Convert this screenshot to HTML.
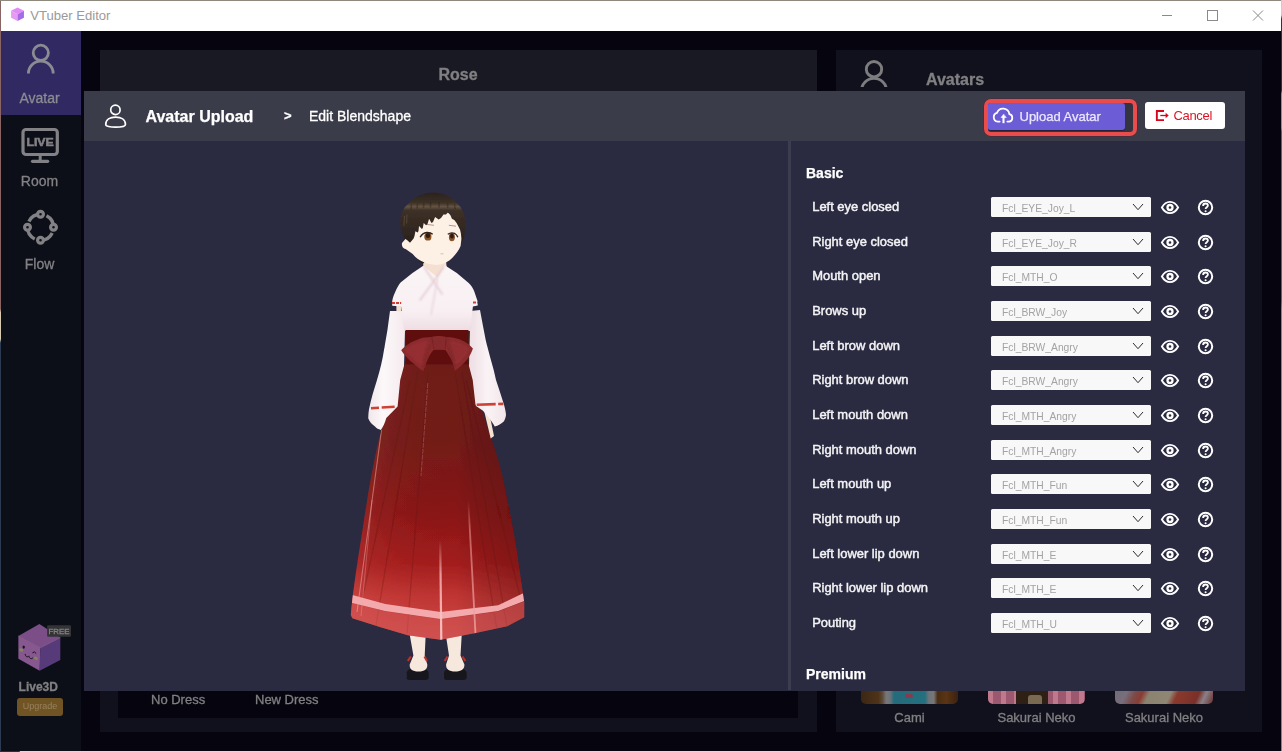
<!DOCTYPE html>
<html lang="en">
<head>
<meta charset="utf-8">
<title>VTuber Editor</title>
<style>
*{box-sizing:border-box;margin:0;padding:0}
html,body{width:1282px;height:752px;overflow:hidden;background:#8a7f78}
body{font-family:"Liberation Sans",sans-serif;position:relative}
.abs{position:absolute}
#desk{left:0;top:0;width:1282px;height:752px;background:#8f887c}
#dl{left:0;top:1px;width:1px;height:751px;background:linear-gradient(180deg,#8a6462 0,#8a6462 41%,#d9cbb2 41.500%,#d9cbb2 45%,#2c3b52 45.500%,#2c3b52 100%)}
#dr{left:1281px;top:0;width:1px;height:752px;background:linear-gradient(180deg,#d0ccc4 0,#d0ccc4 2%,#2a3448 2.500%,#2a3448 12%,#9a8a78 12.500%,#9a8a78 17%,#5a6a60 17.500%,#5a6a60 40%,#9a7a7a 41%,#9a7a7a 100%)}
#db{left:0;top:751px;width:1282px;height:1px;background:linear-gradient(90deg,#22304a 0,#22304a 1.500%,#e2dace 1.600%,#e2dace 100%)}
#win{left:1px;top:1px;width:1280px;height:750px;background:#06050f;overflow:hidden}
#title{left:0;top:0;width:1280px;height:30px;background:#fff}
#title .t{left:29.200px;top:7px;font-size:13.100px;line-height:16px;color:#9a9a9a;white-space:nowrap}
#side{will-change:transform;left:0;top:30px;width:80px;height:720px;background:#0d0f18}
#side .act{left:0;top:0;width:80px;height:84px;background:#312a62}
.slabel{width:77px;text-align:center;font-size:14px;line-height:16px;color:#8b8b93;left:0;-webkit-text-stroke:0.3px #8b8b93}
.bp{background:#11111d}
.gtxt{color:#808083;white-space:nowrap;will-change:transform;-webkit-text-stroke:0.3px #808083}
#modal{will-change:transform;left:83px;top:90px;width:1161px;height:600px;background:#2a2b40;overflow:hidden}
#mhead{left:0;top:0;width:1161px;height:50px;background:#3b3c4a}
.w{color:#fff;white-space:nowrap;-webkit-text-stroke:0.25px #fff}
.row{left:707px;width:454px;height:20px}
.row .lb{left:21.2px;top:1px;font-size:12.95px;line-height:18px;color:#f4f4f6;white-space:nowrap;-webkit-text-stroke:0.45px #f4f4f6}
.row .dd{left:200px;top:0;width:160px;height:19.6px;background:#f8f8f8;border-radius:1.5px}
.row .dd span{position:absolute;left:11px;top:3.8px;font-size:10.3px;line-height:15px;color:#a3a3a3;white-space:nowrap}
.row .dd svg{position:absolute;left:141px;top:6px}
.row .eye{left:369.3px;top:3px}
.row .hp{left:406.2px;top:2.1px}
</style>
</head>
<body>
<div id="desk" class="abs"></div><div id="dl" class="abs"></div><div id="dr" class="abs"></div><div id="db" class="abs"></div>
<div id="win" class="abs">

<!-- title bar -->
<div id="title" class="abs">
  <svg class="abs" style="left:8.500px;top:5.600px" width="15" height="15" viewBox="0 0 14 14">
    <polygon points="7,0.5 13,3.5 7,6.8 1,3.5" fill="#e08cf5"/>
    <polygon points="1,3.5 7,6.8 7,13 1,10" fill="#e79af3"/>
    <polygon points="13,3.5 7,6.8 7,13 13,10" fill="#a46be6"/>
  </svg>
  <div class="t abs">VTuber Editor</div>
  <svg class="abs" style="left:1160px;top:8px" width="110" height="14" viewBox="0 0 110 14" fill="none" stroke="#8a8a8a" stroke-width="1">
    <path d="M1 6.5h10"/>
    <rect x="46.5" y="1.5" width="10" height="10"/>
    <path d="M92 1.5l10 10M102 1.5l-10 10"/>
  </svg>
</div>

<!-- sidebar -->
<div id="side" class="abs">
  <div class="act abs"></div>
  <svg class="abs" style="left:24px;top:10px" width="32" height="36" viewBox="0 0 32 36" fill="none" stroke="#8b8b93" stroke-width="2.8">
    <circle cx="15.8" cy="11.8" r="7.6"/>
    <path d="M3.4 32.5 A12.4 12.4 0 0 1 28.2 32.5"/>
  </svg>
  <div class="slabel abs" style="top:59px">Avatar</div>

  <svg class="abs" style="left:19px;top:95px" width="42" height="40" viewBox="0 0 42 40" fill="none" stroke="#828286" stroke-width="3.2">
    <rect x="3" y="3.5" width="34.3" height="25" rx="3"/>
    <path d="M20.2 28v7" stroke-width="3"/>
    <path d="M12.5 35.3h15.2" stroke-linecap="round" stroke-width="3.2"/>
    <text x="20.1" y="20.4" text-anchor="middle" font-family="Liberation Sans, sans-serif" font-weight="bold" font-size="10.6" fill="#828286" stroke="#828286" stroke-width="0.5" textLength="27.4" lengthAdjust="spacingAndGlyphs">LIVE</text>
  </svg>
  <div class="slabel abs" style="top:142px;color:#828286;-webkit-text-stroke-color:#828286">Room</div>

  <svg class="abs" style="left:20px;top:176px" width="40" height="40" viewBox="0 0 40 40" fill="none" stroke="#828286">
    <circle cx="19.5" cy="20.3" r="13" stroke-width="3.4" stroke-dasharray="14.6 5.82" stroke-dashoffset="14.6"/>
    <g stroke-width="3.2" fill="#0d0f18">
      <circle cx="19.5" cy="7.2" r="2.9"/><circle cx="19.5" cy="33.3" r="2.9"/>
      <circle cx="6.5" cy="20.3" r="2.9"/><circle cx="32.5" cy="20.3" r="2.9"/>
    </g>
  </svg>
  <div class="slabel abs" style="top:225px;color:#828286;-webkit-text-stroke-color:#828286">Flow</div>

  <!-- Live3D cube -->
  <svg class="abs" style="left:14px;top:590px" width="62" height="54" viewBox="0 0 62 54">
    <polygon points="24.400,3 45.300,16.600 25.200,26.900 3.400,15" fill="#7b4e88"/>
    <polygon points="3.400,15 25.200,26.900 24.700,49.700 3.400,37.700" fill="#86588f"/>
    <polygon points="45.300,16.600 25.200,26.900 24.700,49.700 45.300,38.900" fill="#573a79"/>
    <path d="M3.400 15L25.200 26.900L45.300 16.600" stroke="#9a6ea0" stroke-width=".6" fill="none"/>
    <ellipse cx="8.700" cy="26.100" rx="1.150" ry="1.600" fill="#1a0f1e"/>
    <path d="M10.200 33.300c.3 2.500 2.200 3.400 3.600 1.600c.6 2.800 2.600 3.600 4 2" fill="none" stroke="#1a0f1e" stroke-width="1" stroke-linecap="round"/>
    <path d="M17.700 31.600q1.800-2 3.300.6" fill="none" stroke="#1a0f1e" stroke-width="1" stroke-linecap="round"/>
    <ellipse cx="6.200" cy="28.900" rx="2.100" ry="1.500" fill="#80875f" transform="rotate(28 6.200 28.900)"/>
    <ellipse cx="20.900" cy="37.300" rx="2.100" ry="1.500" fill="#80875f" transform="rotate(28 20.900 37.300)"/>
    <rect x="32.100" y="4.200" width="23.900" height="11.600" rx="1.200" fill="#343437"/>
    <text x="43.900" y="12.700" text-anchor="middle" font-family="Liberation Sans, sans-serif" font-size="8" fill="#848484" stroke="#848484" stroke-width="0.300" textLength="21" lengthAdjust="spacingAndGlyphs">FREE</text>
  </svg>
  <div class="abs" style="left:0;top:647.600px;width:74.600px;text-align:center;font-size:12px;font-weight:bold;line-height:16px;color:#808082;-webkit-text-stroke:0.3px #808082">Live3D</div>
  <div class="abs" style="left:16px;top:667px;width:46px;height:18px;border-radius:3px;background:#715423;color:#958260;font-size:9px;line-height:17px;text-align:center">Upgrade</div>
</div>

<!-- background panels (dimmed) -->
<div class="abs bp" style="left:98.600px;top:49px;width:717.400px;height:682px"></div>
<div class="abs" style="left:98.600px;top:49px;width:717.400px;height:52px;background:#191923"></div>
<div class="abs" style="left:117px;top:100px;width:680px;height:617px;background:#06050f"></div>
<div class="abs gtxt" style="left:98px;top:64px;width:718px;text-align:center;font-size:16px;font-weight:bold;line-height:20px">Rose</div>
<div class="abs gtxt" style="left:150px;top:690px;font-size:13px;line-height:18px">No Dress</div>
<div class="abs gtxt" style="left:254px;top:690px;font-size:13px;line-height:18px">New Dress</div>

<div class="abs bp" style="left:835px;top:49px;width:426px;height:682px"></div>
<svg class="abs" style="left:857px;top:55px" width="32" height="30.700" viewBox="0 0 32 30.700" fill="none" stroke="#7d7d80" stroke-width="2.900">
  <circle cx="16" cy="13.200" r="7.700"/>
  <path d="M3.400 35 A12.600 12.600 0 0 1 28.600 35"/>
</svg>
<div class="abs gtxt" style="left:925px;top:69px;font-size:16px;font-weight:bold;line-height:20px">Avatars</div>

<!-- thumbnails -->
<div class="abs" style="left:860px;top:660px;width:97px;height:42.500px;border-radius:5px;overflow:hidden;background:linear-gradient(90deg,#3c2714 0,#4e3318 18%,#5c4a36 22%,#77777a 26%,#6f7478 30%,#246b7c 34%,#24707f 66%,#6f7478 70%,#77777a 75%,#4a2d12 79%,#5a3414 88%,#3a2210 100%)">
  <div class="abs" style="left:44px;top:33px;width:8px;height:4px;border-radius:2px;background:#8a3a4a"></div>
</div>
<div class="abs" style="left:987px;top:660px;width:97px;height:42.500px;border-radius:5px;overflow:hidden;background:repeating-linear-gradient(90deg,#c0788c 0,#c0788c 5px,#9c586e 5px,#9c586e 13px)">
  <div class="abs" style="left:28px;top:26px;width:32px;height:18px;background:#2f2016;border-radius:3px 3px 0 0"></div>
  <div class="abs" style="left:40px;top:34px;width:14px;height:10px;background:#7a6a52;border-radius:3px 3px 0 0"></div>
</div>
<div class="abs" style="left:1114px;top:660px;width:98px;height:42.500px;border-radius:5px;overflow:hidden;background:linear-gradient(115deg,#6e6672 0,#77707c 22%,#7d4a48 30%,#8a3c34 36%,#8c8270 42%,#8f8674 60%,#8a3a2c 66%,#7a3028 84%,#8a8088 90%,#6a3030 100%)"></div>
<div class="abs gtxt" style="left:860px;top:708px;width:97px;text-align:center;font-size:13px;line-height:18px">Cami</div>
<div class="abs gtxt" style="left:977px;top:708px;width:117px;text-align:center;font-size:13px;line-height:18px">Sakurai Neko</div>
<div class="abs gtxt" style="left:1104px;top:708px;width:118px;text-align:center;font-size:13px;line-height:18px">Sakurai Neko</div>

<!-- modal -->
<div id="modal" class="abs">
  <div id="mhead" class="abs"></div>
  <svg class="abs" style="left:20px;top:12px" width="26" height="28" viewBox="0 0 26 28" fill="none" stroke="#fff" stroke-width="1.700">
    <circle cx="11.400" cy="6.900" r="4.700"/>
    <path d="M1.750 21.400C1.750 16.600 6 14.150 11.600 14.150S21.450 16.600 21.450 21.400C21.450 23.300 17 24.050 11.600 24.050S1.750 23.300 1.750 21.400z"/>
  </svg>
  <div class="abs w" style="left:61.500px;top:15.500px;font-size:16px;font-weight:bold;line-height:20px">Avatar Upload</div>
  <div class="abs w" style="left:200px;top:16px;font-size:13px;font-weight:bold;line-height:18px">&gt;</div>
  <div class="abs w" style="left:225px;top:16px;font-size:14px;line-height:18px;-webkit-text-stroke:0.3px #fff">Edit Blendshape</div>

  <div class="abs" style="left:900.100px;top:7.500px;width:152.900px;height:37.600px;border:4.200px solid #ea4b4c;border-radius:7px;background:#33343f;box-shadow:0 0 0 .5px rgba(90,30,40,.7)"></div>
  <div class="abs" style="left:903.800px;top:11.700px;width:137.500px;height:27.600px;background:#6c5cd6;border-radius:2px 3px 3px 2px;box-shadow:0 1px 0 rgba(20,20,40,.5)"></div>
  <svg class="abs" style="left:908.200px;top:15.900px" width="23" height="18.800" viewBox="0 0 22 18" fill="none" stroke="#fff" stroke-width="1.700" stroke-linecap="round" stroke-linejoin="round">
    <path d="M7.300 14H5.400a4.300 4.300 0 0 1-.6-8.400 6.100 6.100 0 0 1 11.800 1.300 3.600 3.600 0 0 1-.4 7.100H14.700"/>
    <path d="M11 15.500V9.500" stroke-width="2" stroke-linecap="butt"/>
    <path d="M11 7.100L8.700 10.100H13.300z" fill="#fff" stroke-width=".6"/>
  </svg>
  <div class="abs" style="left:935.500px;top:16.600px;font-size:13px;line-height:18px;color:#ece8ff;white-space:nowrap;-webkit-text-stroke:0.25px #ece8ff">Upload Avatar</div>

  <div class="abs" style="left:1061px;top:11.200px;width:80px;height:26.700px;background:#fff;border-radius:3px"></div>
  <svg class="abs" style="left:1071px;top:19px" width="15" height="12" viewBox="0 0 15 12" fill="none" stroke="#d6061c">
    <path d="M9 0.950H1.850V10.150H9" stroke-width="1.900"/>
    <path d="M5.300 5.500H11" stroke-width="1.300"/>
    <path d="M10.600 2.800L13.700 5.500L10.600 8.200z" fill="#d6061c" stroke="none"/>
  </svg>
  <div class="abs" style="left:1089.400px;top:16px;font-size:13px;line-height:18px;letter-spacing:-0.3px;color:#da1626;white-space:nowrap">Cancel</div>
  <!--CHAR_S-->
  <svg class="abs" style="left:256px;top:89px" width="270" height="500" viewBox="340 180 270 500">
    <defs>
      <linearGradient id="sk" x1="0" y1="366" x2="0" y2="640" gradientUnits="userSpaceOnUse">
        <stop offset="0" stop-color="#701d19"/><stop offset=".28" stop-color="#731b18"/><stop offset=".54" stop-color="#8a1616"/>
        <stop offset=".72" stop-color="#a41d1d"/><stop offset=".84" stop-color="#c03533"/><stop offset="1" stop-color="#cf4c4b"/>
      </linearGradient>
      <linearGradient id="skx" x1="350" y1="0" x2="526" y2="0" gradientUnits="userSpaceOnUse">
        <stop offset="0" stop-color="#ff9a90" stop-opacity=".12"/><stop offset=".25" stop-color="#ff8a80" stop-opacity=".03"/><stop offset=".6" stop-color="#000" stop-opacity="0"/><stop offset="1" stop-color="#300" stop-opacity=".28"/>
      </linearGradient>
      <linearGradient id="hair" x1="0" y1="192" x2="0" y2="246" gradientUnits="userSpaceOnUse">
        <stop offset="0" stop-color="#2b211c"/><stop offset=".2" stop-color="#3d3026"/><stop offset=".27" stop-color="#655443"/><stop offset=".34" stop-color="#3d3026"/><stop offset="1" stop-color="#2a201c"/>
      </linearGradient>
      <linearGradient id="slvL" x1="368" y1="0" x2="406" y2="0" gradientUnits="userSpaceOnUse">
        <stop offset="0" stop-color="#f1e6ea"/><stop offset=".4" stop-color="#fcf8f9"/><stop offset="1" stop-color="#f4e9ed"/>
      </linearGradient>
      <linearGradient id="slvR" x1="470" y1="0" x2="505" y2="0" gradientUnits="userSpaceOnUse">
        <stop offset="0" stop-color="#eedfe4"/><stop offset=".5" stop-color="#faf3f5"/><stop offset="1" stop-color="#f2e6ea"/>
      </linearGradient>
      <linearGradient id="top" x1="0" y1="266" x2="0" y2="331" gradientUnits="userSpaceOnUse">
        <stop offset="0" stop-color="#fbf5f6"/><stop offset=".7" stop-color="#f8eff2"/><stop offset="1" stop-color="#eedde3"/>
      </linearGradient>
      <radialGradient id="bowg" cx="438" cy="345" r="36" gradientUnits="userSpaceOnUse">
        <stop offset="0" stop-color="#a83236"/><stop offset=".6" stop-color="#9b2b2e"/><stop offset="1" stop-color="#7c2023"/>
      </radialGradient>
      <filter id="soft" x="-5%" y="-5%" width="110%" height="110%"><feGaussianBlur stdDeviation=".45"/></filter>
      <filter id="soft3" x="-10%" y="-30%" width="120%" height="160%"><feGaussianBlur stdDeviation=".7"/></filter>
      <filter id="soft2" x="-20%" y="-20%" width="140%" height="140%"><feGaussianBlur stdDeviation="1.2"/></filter>
      <clipPath id="skc"><path d="M405 364 L469 364 C472 372 476 388 480 404 C486 424 492 440 497 456 C501 470 504 482 506.500 496 C510 512 514 532 517.500 556 C520 574 522.500 590 524.200 602 L524.200 617.200 L507.200 626.200 L475.600 633 L440.600 639.800 L407.800 635.300 L380.700 627.300 L352.400 618.300 L350.800 615 C352 600 354.500 582 357.500 562 C360 546 362 534 364 520 C366 508 367 502 368 494 C370 484 371 476 372.500 470 C378 440 384 418 392 396 C396 384 401 374 405 364z"/></clipPath>
    </defs>
    <g filter="url(#soft)">
    <!-- legs & shoes -->
    <path d="M406.700 673c0-7.500 21.900-7.500 21.900 0v5.500c-3 4-19 4-21.900 0z" fill="#17151a"/><path d="M444 673c0-7.500 22.600-7.500 22.600 0v5.500c-3 4-19.600 4-22.600 0z" fill="#17151a"/>
    <path d="M408.900 630h17l-1.200 25.600l2.600 9c.3 4.500-2.600 7-8.800 7s-9.200-2.600-8.800-7l3.700-9z" fill="#f6e8dc"/>
    <path d="M445.100 630h16.900l-1.500 25.600l3.900 9c.3 4.500-3 7-9.200 7s-9.400-2.600-9.100-7l2.900-9z" fill="#f6e8dc"/>
    <path d="M407.800 661l3-4.500M427 661l-2.500-4.500M444.600 661l3-4.500M465.400 661l-3-4.500" stroke="#b8302c" stroke-width="2.200"/>
    <!-- skirt -->
    <g clip-path="url(#skc)">
      <rect x="345" y="360" width="190" height="285" fill="url(#sk)"/>
      <rect x="345" y="360" width="190" height="285" fill="url(#skx)"/>
      <g stroke="#4e100f" stroke-opacity=".22" stroke-width="1.300" fill="none">
        <path d="M418 370L376 626M428 370L407 634M462 372L507 626M410 380L362 600M466 380L521 600M455 372L497 630"/>
      </g>
      <path d="M346 590.500 L352.400 595.100 L385.200 604.100 L440.600 612 L498.200 605.200 L524.200 592.800 L530 590.500 L530 598.500 L524.200 600.900 L498.200 611 L440.600 618.900 L385.200 611 L352.400 603.100 L346 599.500z" fill="#f4aaac" filter="url(#soft3)"/>
      <path d="M346 600 L352.400 603.600 L385.200 611.500 L440.600 619.400 L498.200 611.500 L524.200 601.400 L530 599 L530 650 L346 650z" fill="#d25656" fill-opacity=".5"/>
      <defs>
        <linearGradient id="hl1" x1="0" y1="540" x2="0" y2="640" gradientUnits="userSpaceOnUse"><stop offset="0" stop-color="#f6b6b6" stop-opacity="0"/><stop offset=".35" stop-color="#f6b6b6" stop-opacity=".8"/><stop offset="1" stop-color="#fac8c8" stop-opacity=".95"/></linearGradient>
        <linearGradient id="hl2" x1="0" y1="440" x2="0" y2="640" gradientUnits="userSpaceOnUse"><stop offset="0" stop-color="#e88c8c" stop-opacity="0"/><stop offset=".3" stop-color="#e88c8c" stop-opacity="0"/><stop offset=".45" stop-color="#e88c8c" stop-opacity=".6"/><stop offset="1" stop-color="#f4a8a8" stop-opacity=".8"/></linearGradient>
      </defs>
      <path d="M440.200 540L441.300 641" stroke="url(#hl1)" stroke-width="2.200" fill="none"/>
      <path d="M465 440L475.600 636" stroke="url(#hl2)" stroke-width="1.800" fill="none"/>
      <path d="M381.500 430L357 612" stroke="#f0a8a8" stroke-opacity=".55" stroke-width="1.100" fill="none"/><path d="M372 500L361 616" stroke="#f0a8a8" stroke-opacity=".35" stroke-width="1" fill="none"/>
      <path d="M427.800 383L421 476" stroke="#e8a8a8" stroke-opacity=".32" stroke-width=".9" stroke-dasharray="5 1" fill="none"/>
    </g>
    <!-- sleeves -->
    <path d="M390 311L403 311L405 330L404 366L400.200 380L397.600 406.600L386.300 417.900C385 423 383 427 380.900 429.900C378.500 429.500 376.500 428.300 375 426.600C372 424.500 369.500 421.800 368.300 418.600C368.200 415.500 368.500 412.400 369 409.300C371 399 374 389.500 377 380C380 370 382.500 360 384 350C386.500 337 388.500 324 390 311z" fill="url(#slvL)"/>
    <path d="M484 410.600L489.300 413.300L494 435.900L490.700 438.500z" fill="#f5e2d0"/>
    <path d="M470.500 311L480 310C481.800 320 483.800 330 485.700 340C488 350 491 360 493.700 370L496 380C498.500 387.500 501 395 503.300 402.600C504.600 406.500 505.600 410.500 506 414.600C505.800 417 505.200 419.300 504 421.200C501.300 423.600 498.200 425.400 494.700 426.600L493.300 423.900C490 419 486.500 414.500 482.700 410.600L476 405.900L475.400 403.900L472.700 380L469 366z" fill="url(#slvR)"/>
    <path d="M371 408.200l25.900-1.600" stroke="#cf4034" stroke-width="2.600" stroke-dasharray="8 2.700 13 2.700"/>
    <path d="M476.700 404.800l26.600-.9" stroke="#cf4034" stroke-width="2.600" stroke-dasharray="19 2.500 6 2.500"/>
    <!-- neck & face -->
    <path d="M423 262L446 261L447 270L437.600 279L423.500 268z" fill="#f4dfd1"/>
    <path d="M413.300 253.500L422.500 264.500L424.500 262L417 251z" fill="#2a201c"/>
    <path d="M402 243C401.500 246 403 248.500 405.600 249L412.700 254C416 258 419 260 422.300 261.600C428 264.500 435 265.500 440.300 264.600C445 263.500 449 261 452.200 258C456 254 459 250 460.600 246L461.500 238L460 222L447 212L425 218L408 236z" fill="#fdf0e5"/>
    
    <!-- eyes -->
    <ellipse cx="427" cy="236.900" rx="5.200" ry="3.600" fill="#fff8f2"/><ellipse cx="452.600" cy="237.200" rx="4.600" ry="3.600" fill="#fff8f2"/>
    <ellipse cx="427.900" cy="236.700" rx="3.600" ry="3.900" fill="#8a5228"/><ellipse cx="451.900" cy="237.200" rx="3" ry="4.100" fill="#8a5228"/>
    <ellipse cx="427.900" cy="235.600" rx="2.300" ry="2.500" fill="#2e1a10"/><ellipse cx="451.900" cy="236" rx="1.900" ry="2.600" fill="#2e1a10"/>
    <path d="M420.100 237.300Q422.500 233 426.700 232.500Q430.500 232.300 432.700 234.300M447.800 234.200Q451 232 454.500 233.300Q457 234.800 457.800 237.300" stroke="#33201a" stroke-width="1.300" fill="none"/>
    <path d="M426.700 224.400L433.900 225.300M448.900 225.300L456 226.200" stroke="#9a8274" stroke-width=".8" fill="none"/>
    <path d="M440.500 253.800h3" stroke="#e0a9a0" stroke-width=".8"/>
    <!-- hair -->
    <path d="M404.600 238.500C402 234 400 228 400.200 221C401 212 404.500 206.500 409 203C415 196.500 424 192.400 433 192.400C443 192.400 452 196.500 457 203C462 208 465.500 215 465.200 223.500C465.200 229 464.800 234 463.600 239L462.300 242L461.400 236.100L460.200 230.100L457.800 225.300L456.600 223L454.300 220L451.900 218.800L450.700 215.800L448.300 211.900L446 214.600L443.500 214.600L441 218L438.700 219.400L435.100 217L433 222L431.500 223L429.100 218.800L427.500 224L426.100 225.300L423.700 223L422.800 228L421.900 229L419 226L418.500 231L417.700 232.500L415.400 231.300L414.500 236L413.600 238.500L410 242.700L407 240z" fill="url(#hair)"/>
    <path d="M411.500 204.500l-.6 5M417.500 203.500l-.4 5M423.800 203l-.3 5M430.500 202.500v5M439 202.500l.2 5M447.400 203l.4 5M454.500 204l.6 5" stroke="#2b211c" stroke-opacity=".45" stroke-width="1.600" fill="none"/>
    <path d="M404.500 216l-.6 10M407 214.500l-.4 9" stroke="#6b5a48" stroke-opacity=".6" stroke-width=".9" fill="none"/>
    <!-- kimono top -->
    <path d="M423.300 265.800L437.600 277.500L444.800 265.200L456.800 272.900L468.700 283.100C471.500 286 473 288.500 474.100 290.900L477.700 301.600L477.700 305.500L472.900 306.400L471.100 322L470.500 331L404.100 331L403 322L401.100 306.400L392.200 305.800L392.200 301C393 297.500 394 294.500 395.200 292.100C396.500 288.500 398.500 285 400.600 282.500L412.500 272.900z" fill="url(#top)"/>
    <path d="M396.400 306h4.700v5.200h-4.700z" fill="#f2decf"/>
    <path d="M424 267L442.400 294.500M444.500 266.500L419.700 300.500" stroke="#e3cbd2" stroke-width="1.600" fill="none" filter="url(#soft2)"/>
    <path d="M437.600 278L431 315" stroke="#ead6dc" stroke-width="1.500" fill="none" filter="url(#soft2)"/>
    <path d="M392 303h9.200M473 302.500h5" stroke="#cf3e34" stroke-width="1.800" stroke-dasharray="3 1"/>
    <!-- obi & bow -->
    <path d="M405.500 330H468.500V364.500H405.500z" fill="#5f110c"/>
    <path d="M401.200 350.200C403.500 347.500 406.500 345.200 409.600 343.300C412.500 341.400 415.800 340 419.100 338.900C423 337.800 427.500 337.200 431.600 337.100L438.900 336L446.200 337C448.600 337.100 451 337.400 453.500 337.800C457.500 338.600 461.200 339.900 464.500 341.800C467.800 343.600 470.600 345.800 472.900 348.400C471.800 351.800 470.200 355 468.200 357.900C466 361 463.500 363.700 460.800 366C458.900 367.800 456.800 369.400 454.600 370.700C454.300 368 453.700 365.400 452.800 363C451.900 360.400 450.600 357.900 449.100 355.700C448 353.600 446.800 351.700 445.500 349.900L438.900 349.500L433.400 349.900C431.900 351.700 430.600 353.600 429.400 355.700C428 358.400 426.700 361.300 425.700 364.500C424.800 366.700 424 368.900 423.200 371.100C420.200 369.300 417.400 367.100 414.800 364.500C411.500 362 408.600 359.400 406 356.500C404.200 354.500 402.600 352.400 401.200 350.200z" fill="#8c2b2e"/>
    <path d="M405 350C412 343 424 340 432 341C428 346 424 355 422.500 366C415 362 409 356 405 350z" fill="#9a3236" fill-opacity=".55" filter="url(#soft2)"/>
    <path d="M469.500 348.500C462 342.500 452 340.500 446 341.500C450 346 453.500 355 455.500 365.500C462 361 466.500 355 469.500 348.500z" fill="#9a3236" fill-opacity=".45" filter="url(#soft2)"/>
    <path d="M431.500 338C428 346 425.500 356 424 368M446.300 338C450 346 452.500 356 454 368" stroke="#6a1f22" stroke-opacity=".55" stroke-width="1.600" fill="none" filter="url(#soft2)"/>
    <path d="M431.600 337.100L438.900 336L446.200 337L445.500 349L438.900 349.700L433.600 349z" fill="#872a2d"/>
    <path d="M432 337.500L433.800 349M446 337.500L445.300 349" stroke="#6c2024" stroke-opacity=".6" stroke-width="1" fill="none"/>
    </g>
  </svg>
<!--CHAR_E-->
  <div class="abs" style="left:704px;top:50px;width:3px;height:549px;background:#3c3e4f"></div>
  <!--ROWS_S-->
<div class="abs w" style="left:722px;top:73px;font-size:14px;font-weight:bold;line-height:18px">Basic</div>
<div class="row abs" style="top:106px"><div class="lb abs">Left eye closed</div><div class="dd abs"><span>Fcl_EYE_Joy_L</span><svg width="12" height="8" viewBox="0 0 12 8" fill="none" stroke="#2b2b2b" stroke-width="1"><path d="M1 1l5 5.700l5-5.700"/></svg></div><svg class="eye abs" width="20" height="15" viewBox="0 0 20 15" fill="none" stroke="#fff" stroke-width="1.9"><path d="M1.9 7.5C4 3.700 6.800 1.900 10 1.900s6 1.800 8.100 5.600c-2.100 3.800-4.900 5.600-8.100 5.600s-6-1.800-8.100-5.600z"/><circle cx="10" cy="7.500" r="2.500" stroke-width="2.300"/></svg><svg class="hp abs" width="17" height="17" viewBox="0 0 17 17" fill="none" stroke="#fff" stroke-width="2"><circle cx="8.500" cy="8.500" r="6.700"/><path d="M6.100 6.900c0-1.500 1-2.400 2.400-2.400s2.400.8 2.400 2.100c0 1.600-2.300 1.700-2.300 3.400" stroke-width="1.800"/><circle cx="8.600" cy="12.300" r="1.050" fill="#fff" stroke="none"/></svg></div>
<div class="row abs" style="top:141px"><div class="lb abs">Right eye closed</div><div class="dd abs"><span>Fcl_EYE_Joy_R</span><svg width="12" height="8" viewBox="0 0 12 8" fill="none" stroke="#2b2b2b" stroke-width="1"><path d="M1 1l5 5.700l5-5.700"/></svg></div><svg class="eye abs" width="20" height="15" viewBox="0 0 20 15" fill="none" stroke="#fff" stroke-width="1.9"><path d="M1.9 7.5C4 3.700 6.800 1.900 10 1.900s6 1.800 8.100 5.600c-2.100 3.800-4.900 5.600-8.100 5.600s-6-1.800-8.100-5.600z"/><circle cx="10" cy="7.500" r="2.500" stroke-width="2.300"/></svg><svg class="hp abs" width="17" height="17" viewBox="0 0 17 17" fill="none" stroke="#fff" stroke-width="2"><circle cx="8.500" cy="8.500" r="6.700"/><path d="M6.100 6.900c0-1.500 1-2.400 2.400-2.400s2.400.8 2.400 2.100c0 1.600-2.300 1.700-2.300 3.400" stroke-width="1.800"/><circle cx="8.600" cy="12.300" r="1.050" fill="#fff" stroke="none"/></svg></div>
<div class="row abs" style="top:175px"><div class="lb abs">Mouth open</div><div class="dd abs"><span>Fcl_MTH_O</span><svg width="12" height="8" viewBox="0 0 12 8" fill="none" stroke="#2b2b2b" stroke-width="1"><path d="M1 1l5 5.700l5-5.700"/></svg></div><svg class="eye abs" width="20" height="15" viewBox="0 0 20 15" fill="none" stroke="#fff" stroke-width="1.9"><path d="M1.9 7.5C4 3.700 6.800 1.900 10 1.900s6 1.800 8.100 5.600c-2.100 3.800-4.900 5.600-8.100 5.600s-6-1.800-8.100-5.600z"/><circle cx="10" cy="7.500" r="2.500" stroke-width="2.300"/></svg><svg class="hp abs" width="17" height="17" viewBox="0 0 17 17" fill="none" stroke="#fff" stroke-width="2"><circle cx="8.500" cy="8.500" r="6.700"/><path d="M6.100 6.900c0-1.500 1-2.400 2.400-2.400s2.400.8 2.400 2.100c0 1.600-2.300 1.700-2.300 3.400" stroke-width="1.800"/><circle cx="8.600" cy="12.300" r="1.050" fill="#fff" stroke="none"/></svg></div>
<div class="row abs" style="top:210px"><div class="lb abs">Brows up</div><div class="dd abs"><span>Fcl_BRW_Joy</span><svg width="12" height="8" viewBox="0 0 12 8" fill="none" stroke="#2b2b2b" stroke-width="1"><path d="M1 1l5 5.700l5-5.700"/></svg></div><svg class="eye abs" width="20" height="15" viewBox="0 0 20 15" fill="none" stroke="#fff" stroke-width="1.9"><path d="M1.9 7.5C4 3.700 6.800 1.900 10 1.900s6 1.800 8.100 5.600c-2.100 3.800-4.900 5.600-8.100 5.600s-6-1.800-8.100-5.600z"/><circle cx="10" cy="7.500" r="2.500" stroke-width="2.300"/></svg><svg class="hp abs" width="17" height="17" viewBox="0 0 17 17" fill="none" stroke="#fff" stroke-width="2"><circle cx="8.500" cy="8.500" r="6.700"/><path d="M6.100 6.900c0-1.500 1-2.400 2.400-2.400s2.400.8 2.400 2.100c0 1.600-2.300 1.700-2.300 3.400" stroke-width="1.800"/><circle cx="8.600" cy="12.300" r="1.050" fill="#fff" stroke="none"/></svg></div>
<div class="row abs" style="top:245px"><div class="lb abs">Left brow down</div><div class="dd abs"><span>Fcl_BRW_Angry</span><svg width="12" height="8" viewBox="0 0 12 8" fill="none" stroke="#2b2b2b" stroke-width="1"><path d="M1 1l5 5.700l5-5.700"/></svg></div><svg class="eye abs" width="20" height="15" viewBox="0 0 20 15" fill="none" stroke="#fff" stroke-width="1.9"><path d="M1.9 7.5C4 3.700 6.800 1.900 10 1.900s6 1.800 8.100 5.600c-2.100 3.800-4.900 5.600-8.100 5.600s-6-1.800-8.100-5.600z"/><circle cx="10" cy="7.500" r="2.500" stroke-width="2.300"/></svg><svg class="hp abs" width="17" height="17" viewBox="0 0 17 17" fill="none" stroke="#fff" stroke-width="2"><circle cx="8.500" cy="8.500" r="6.700"/><path d="M6.100 6.900c0-1.500 1-2.400 2.400-2.400s2.400.8 2.400 2.100c0 1.600-2.300 1.700-2.300 3.400" stroke-width="1.800"/><circle cx="8.600" cy="12.300" r="1.050" fill="#fff" stroke="none"/></svg></div>
<div class="row abs" style="top:279px"><div class="lb abs">Right brow down</div><div class="dd abs"><span>Fcl_BRW_Angry</span><svg width="12" height="8" viewBox="0 0 12 8" fill="none" stroke="#2b2b2b" stroke-width="1"><path d="M1 1l5 5.700l5-5.700"/></svg></div><svg class="eye abs" width="20" height="15" viewBox="0 0 20 15" fill="none" stroke="#fff" stroke-width="1.9"><path d="M1.9 7.5C4 3.700 6.800 1.900 10 1.900s6 1.800 8.100 5.600c-2.100 3.800-4.900 5.600-8.100 5.600s-6-1.800-8.100-5.600z"/><circle cx="10" cy="7.500" r="2.500" stroke-width="2.300"/></svg><svg class="hp abs" width="17" height="17" viewBox="0 0 17 17" fill="none" stroke="#fff" stroke-width="2"><circle cx="8.500" cy="8.500" r="6.700"/><path d="M6.100 6.900c0-1.500 1-2.400 2.400-2.400s2.400.8 2.400 2.100c0 1.600-2.300 1.700-2.300 3.400" stroke-width="1.800"/><circle cx="8.600" cy="12.300" r="1.050" fill="#fff" stroke="none"/></svg></div>
<div class="row abs" style="top:314px"><div class="lb abs">Left mouth down</div><div class="dd abs"><span>Fcl_MTH_Angry</span><svg width="12" height="8" viewBox="0 0 12 8" fill="none" stroke="#2b2b2b" stroke-width="1"><path d="M1 1l5 5.700l5-5.700"/></svg></div><svg class="eye abs" width="20" height="15" viewBox="0 0 20 15" fill="none" stroke="#fff" stroke-width="1.9"><path d="M1.9 7.5C4 3.700 6.800 1.900 10 1.900s6 1.800 8.100 5.600c-2.100 3.800-4.900 5.600-8.100 5.600s-6-1.800-8.100-5.600z"/><circle cx="10" cy="7.500" r="2.500" stroke-width="2.300"/></svg><svg class="hp abs" width="17" height="17" viewBox="0 0 17 17" fill="none" stroke="#fff" stroke-width="2"><circle cx="8.500" cy="8.500" r="6.700"/><path d="M6.100 6.900c0-1.500 1-2.400 2.400-2.400s2.400.8 2.400 2.100c0 1.600-2.300 1.700-2.300 3.400" stroke-width="1.800"/><circle cx="8.600" cy="12.300" r="1.050" fill="#fff" stroke="none"/></svg></div>
<div class="row abs" style="top:349px"><div class="lb abs">Right mouth down</div><div class="dd abs"><span>Fcl_MTH_Angry</span><svg width="12" height="8" viewBox="0 0 12 8" fill="none" stroke="#2b2b2b" stroke-width="1"><path d="M1 1l5 5.700l5-5.700"/></svg></div><svg class="eye abs" width="20" height="15" viewBox="0 0 20 15" fill="none" stroke="#fff" stroke-width="1.9"><path d="M1.9 7.5C4 3.700 6.800 1.900 10 1.900s6 1.800 8.100 5.600c-2.100 3.800-4.900 5.600-8.100 5.600s-6-1.800-8.100-5.600z"/><circle cx="10" cy="7.500" r="2.500" stroke-width="2.300"/></svg><svg class="hp abs" width="17" height="17" viewBox="0 0 17 17" fill="none" stroke="#fff" stroke-width="2"><circle cx="8.500" cy="8.500" r="6.700"/><path d="M6.100 6.900c0-1.500 1-2.400 2.400-2.400s2.400.8 2.400 2.100c0 1.600-2.300 1.700-2.300 3.400" stroke-width="1.800"/><circle cx="8.600" cy="12.300" r="1.050" fill="#fff" stroke="none"/></svg></div>
<div class="row abs" style="top:383px"><div class="lb abs">Left mouth up</div><div class="dd abs"><span>Fcl_MTH_Fun</span><svg width="12" height="8" viewBox="0 0 12 8" fill="none" stroke="#2b2b2b" stroke-width="1"><path d="M1 1l5 5.700l5-5.700"/></svg></div><svg class="eye abs" width="20" height="15" viewBox="0 0 20 15" fill="none" stroke="#fff" stroke-width="1.9"><path d="M1.9 7.5C4 3.700 6.800 1.900 10 1.900s6 1.800 8.100 5.600c-2.100 3.800-4.900 5.600-8.100 5.600s-6-1.800-8.100-5.600z"/><circle cx="10" cy="7.500" r="2.500" stroke-width="2.300"/></svg><svg class="hp abs" width="17" height="17" viewBox="0 0 17 17" fill="none" stroke="#fff" stroke-width="2"><circle cx="8.500" cy="8.500" r="6.700"/><path d="M6.100 6.900c0-1.500 1-2.400 2.400-2.400s2.400.8 2.400 2.100c0 1.600-2.300 1.700-2.300 3.400" stroke-width="1.800"/><circle cx="8.600" cy="12.300" r="1.050" fill="#fff" stroke="none"/></svg></div>
<div class="row abs" style="top:418px"><div class="lb abs">Right mouth up</div><div class="dd abs"><span>Fcl_MTH_Fun</span><svg width="12" height="8" viewBox="0 0 12 8" fill="none" stroke="#2b2b2b" stroke-width="1"><path d="M1 1l5 5.700l5-5.700"/></svg></div><svg class="eye abs" width="20" height="15" viewBox="0 0 20 15" fill="none" stroke="#fff" stroke-width="1.9"><path d="M1.9 7.5C4 3.700 6.800 1.900 10 1.900s6 1.800 8.100 5.600c-2.100 3.800-4.900 5.600-8.100 5.600s-6-1.800-8.100-5.600z"/><circle cx="10" cy="7.500" r="2.500" stroke-width="2.300"/></svg><svg class="hp abs" width="17" height="17" viewBox="0 0 17 17" fill="none" stroke="#fff" stroke-width="2"><circle cx="8.500" cy="8.500" r="6.700"/><path d="M6.100 6.900c0-1.500 1-2.400 2.400-2.400s2.400.8 2.400 2.100c0 1.600-2.300 1.700-2.300 3.400" stroke-width="1.800"/><circle cx="8.600" cy="12.300" r="1.050" fill="#fff" stroke="none"/></svg></div>
<div class="row abs" style="top:453px"><div class="lb abs">Left lower lip down</div><div class="dd abs"><span>Fcl_MTH_E</span><svg width="12" height="8" viewBox="0 0 12 8" fill="none" stroke="#2b2b2b" stroke-width="1"><path d="M1 1l5 5.700l5-5.700"/></svg></div><svg class="eye abs" width="20" height="15" viewBox="0 0 20 15" fill="none" stroke="#fff" stroke-width="1.9"><path d="M1.9 7.5C4 3.700 6.800 1.900 10 1.900s6 1.800 8.100 5.600c-2.100 3.800-4.900 5.600-8.100 5.600s-6-1.800-8.100-5.600z"/><circle cx="10" cy="7.500" r="2.500" stroke-width="2.300"/></svg><svg class="hp abs" width="17" height="17" viewBox="0 0 17 17" fill="none" stroke="#fff" stroke-width="2"><circle cx="8.500" cy="8.500" r="6.700"/><path d="M6.100 6.900c0-1.500 1-2.400 2.400-2.400s2.400.8 2.400 2.100c0 1.600-2.300 1.700-2.300 3.400" stroke-width="1.800"/><circle cx="8.600" cy="12.300" r="1.050" fill="#fff" stroke="none"/></svg></div>
<div class="row abs" style="top:487px"><div class="lb abs">Right lower lip down</div><div class="dd abs"><span>Fcl_MTH_E</span><svg width="12" height="8" viewBox="0 0 12 8" fill="none" stroke="#2b2b2b" stroke-width="1"><path d="M1 1l5 5.700l5-5.700"/></svg></div><svg class="eye abs" width="20" height="15" viewBox="0 0 20 15" fill="none" stroke="#fff" stroke-width="1.9"><path d="M1.9 7.5C4 3.700 6.800 1.900 10 1.900s6 1.800 8.100 5.600c-2.100 3.800-4.900 5.600-8.100 5.600s-6-1.800-8.100-5.600z"/><circle cx="10" cy="7.500" r="2.500" stroke-width="2.300"/></svg><svg class="hp abs" width="17" height="17" viewBox="0 0 17 17" fill="none" stroke="#fff" stroke-width="2"><circle cx="8.500" cy="8.500" r="6.700"/><path d="M6.100 6.900c0-1.500 1-2.400 2.400-2.400s2.400.8 2.400 2.100c0 1.600-2.300 1.700-2.300 3.400" stroke-width="1.800"/><circle cx="8.600" cy="12.300" r="1.050" fill="#fff" stroke="none"/></svg></div>
<div class="row abs" style="top:522px"><div class="lb abs">Pouting</div><div class="dd abs"><span>Fcl_MTH_U</span><svg width="12" height="8" viewBox="0 0 12 8" fill="none" stroke="#2b2b2b" stroke-width="1"><path d="M1 1l5 5.700l5-5.700"/></svg></div><svg class="eye abs" width="20" height="15" viewBox="0 0 20 15" fill="none" stroke="#fff" stroke-width="1.9"><path d="M1.9 7.5C4 3.700 6.800 1.900 10 1.900s6 1.800 8.100 5.600c-2.100 3.800-4.900 5.600-8.100 5.600s-6-1.800-8.100-5.600z"/><circle cx="10" cy="7.500" r="2.500" stroke-width="2.300"/></svg><svg class="hp abs" width="17" height="17" viewBox="0 0 17 17" fill="none" stroke="#fff" stroke-width="2"><circle cx="8.500" cy="8.500" r="6.700"/><path d="M6.100 6.900c0-1.500 1-2.400 2.400-2.400s2.400.8 2.400 2.100c0 1.600-2.300 1.700-2.300 3.400" stroke-width="1.800"/><circle cx="8.600" cy="12.300" r="1.050" fill="#fff" stroke="none"/></svg></div>
<div class="abs w" style="left:722px;top:574px;font-size:14px;font-weight:bold;line-height:18px">Premium</div>
<!--ROWS_E-->
</div>

</div>
</body>
</html>
